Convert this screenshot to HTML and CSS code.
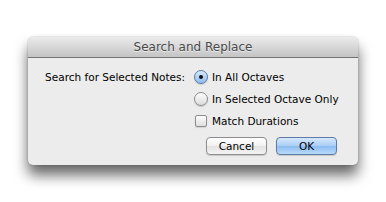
FILE: index.html
```html
<html>
<head>
	<title>Search and Replace</title>
	<link rel="stylesheet" href="styles.css">
</head>
<body>

<div class='window'>
	<div class='titlebar'>Search and Replace</div>
	<div class='content'>
		<div class='form'>
			<div class='label'>Search for Selected Notes:</div>
			<div class='options'>
				<div class='opt'><span class='radio on'></span>In All Octaves</div>
				<div class='opt'><span class='radio'></span>In Selected Octave Only</div>
				<div class='opt'><span class='check'></span>Match Durations</div>
			</div>
		</div>
		<div class='buttons'>
			<div class='btn'>Cancel</div>
			<div class='btn def'>OK</div>
		</div>
	</div>
</div>

</body>
</html>
```

FILE: styles.css
```css
body{
	margin:0;
	padding:37px 0 0 28px;
	background:#fff;
	font-family:"DejaVu Sans", sans-serif;
	font-size:10.5px;
	color:#000;
}
.window{
	width:330px;
	height:128px;
	border-radius:5px;
	background:#ececec;
	box-shadow:0 10px 14px rgba(0,0,0,0.6), 0 0 2px rgba(0,0,0,0.25);
	overflow:hidden;
}
.titlebar{
	height:20px;
	line-height:20px;
	text-align:center;
	font-size:12px;
	color:#4a4a4a;
	text-shadow:0 1px 0 rgba(255,255,255,0.6);
	background:linear-gradient(#ebebeb, #c4c4c4);
	border-bottom:1px solid #747474;
}
.content{
	padding:8px 21px 0 0;
}
.form{
	display:flex;
	align-items:flex-start;
	white-space:nowrap;
}
.label{
	flex:none;
	width:157px;
	padding-right:9px;
	height:22px;
	line-height:22px;
	text-align:right;
}
.options{
	flex:1;
	display:flex;
	flex-direction:column;
}
.opt{
	height:22px;
	display:flex;
	align-items:center;
}
.opt:last-child{
	height:21px;
}
.radio{
	flex:none;
	position:relative;
	width:12px;
	height:12px;
	margin-right:4px;
	border-radius:50%;
	border:1px solid #8c8c8c;
	background:linear-gradient(#fdfdfd, #dcdcdc);
	box-shadow:0 1px 1px rgba(0,0,0,0.15);
}
.radio.on{
	border-color:#5a7ca8;
	background:linear-gradient(#d9e9fb, #8fbdf0);
}
.radio.on:after{
	content:"";
	position:absolute;
	left:4px;
	top:4px;
	width:4px;
	height:4px;
	border-radius:50%;
	background:#111;
}
.check{
	flex:none;
	width:10px;
	height:10px;
	margin:0 5px 0 1px;
	border-radius:2px;
	border:1px solid #8c8c8c;
	background:linear-gradient(#fdfdfd, #dedede);
	box-shadow:0 1px 1px rgba(0,0,0,0.12);
}
.buttons{
	display:flex;
	justify-content:flex-end;
	gap:9px;
	margin-top:6px;
}
.btn{
	width:59px;
	height:16px;
	line-height:16px;
	text-align:center;
	border:1px solid #8e8e8e;
	border-radius:4px;
	background:linear-gradient(#ffffff, #f1f1f1 50%, #e2e2e2 51%, #f4f4f4);
	box-shadow:0 1px 1px rgba(0,0,0,0.15);
}
.btn.def{
	border-color:#5c7ba6;
	background:linear-gradient(#d6e8fc, #a9cdf5 50%, #8cbcf1 51%, #b9dafb);
}
```
